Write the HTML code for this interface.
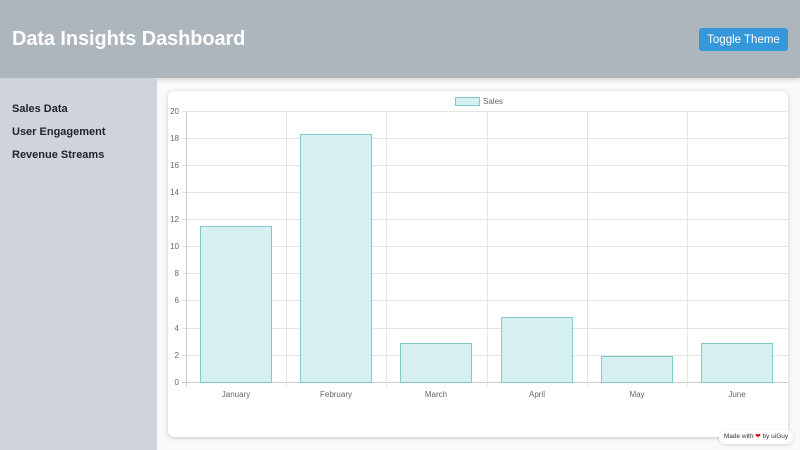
<!DOCTYPE html>
<html><head><meta charset="utf-8"><style>
*{margin:0;padding:0;box-sizing:border-box}
body{width:800px;height:450px;overflow:hidden;font-family:"Liberation Sans",sans-serif;background:#f8f9fa;position:relative}
.hdr{position:absolute;left:0;top:0;width:800px;height:78px;background:#adb5bd;box-shadow:0 2px 4px rgba(0,0,0,.15)}
.hdr h1{position:absolute;left:12px;top:28px;font-size:20px;color:#fff;font-weight:bold;letter-spacing:-0.1px}
.btn{position:absolute;left:699px;top:28px;width:89px;height:23px;background:#3498db;color:#fff;font-size:11.5px;border-radius:3px;text-align:center;line-height:24px}
.side{position:absolute;left:0;top:78px;width:157px;height:372px;background:#ced4da}
.side div{position:absolute;left:12px;font-size:11px;font-weight:bold;color:#212529}
.card{position:absolute;left:168px;top:91px;width:620px;height:346px;background:#fff;border-radius:6px;box-shadow:0 1px 4px rgba(0,0,0,.2)}
.badge{position:absolute;left:719px;top:430px;width:74px;height:14px;background:#fff;border-radius:7px;font-size:6.5px;color:#333;line-height:14px;text-align:center;box-shadow:0 1px 3px rgba(0,0,0,.15)}
</style></head><body>
<div class="hdr"><h1>Data Insights Dashboard</h1><div class="btn">Toggle Theme</div></div>
<div class="side"><div style="top:25px">Sales Data</div><div style="top:48px">User Engagement</div><div style="top:71px">Revenue Streams</div></div>
<div class="card"></div>
<svg style="position:absolute;left:0;top:0" width="800" height="450" font-family="Liberation Sans" font-size="8" fill="#666">
<g stroke="#e5e5e5" stroke-width="1">
<line x1="182" x2="788" y1="111.5" y2="111.5"/><line x1="182" x2="788" y1="138.5" y2="138.5"/><line x1="182" x2="788" y1="165.5" y2="165.5"/><line x1="182" x2="788" y1="192.5" y2="192.5"/><line x1="182" x2="788" y1="219.5" y2="219.5"/><line x1="182" x2="788" y1="246.5" y2="246.5"/><line x1="182" x2="788" y1="273.5" y2="273.5"/><line x1="182" x2="788" y1="300.5" y2="300.5"/><line x1="182" x2="788" y1="328.5" y2="328.5"/><line x1="182" x2="788" y1="355.5" y2="355.5"/><line x1="182" x2="788" y1="382.5" y2="382.5" stroke="#ccc"/>
<line x1="186.5" x2="186.5" y1="111" y2="387" stroke="#ccc"/><line x1="286.5" x2="286.5" y1="111" y2="387"/><line x1="386.5" x2="386.5" y1="111" y2="387"/><line x1="487.5" x2="487.5" y1="111" y2="387"/><line x1="587.5" x2="587.5" y1="111" y2="387"/><line x1="687.5" x2="687.5" y1="111" y2="387"/>
</g>
<g fill="#d6eff0" stroke="#7fcbc9" stroke-width="1">
<rect x="200.5" y="226.5" width="71" height="156"/><rect x="300.5" y="134.5" width="71" height="248"/><rect x="400.5" y="343.5" width="71" height="39"/><rect x="501.5" y="317.5" width="71" height="65"/><rect x="601.5" y="356.5" width="71" height="26"/><rect x="701.5" y="343.5" width="71" height="39"/>
<rect x="455.5" y="97.5" width="24" height="8"/>
</g>
<text x="483" y="104">Sales</text>
<g text-anchor="end"><text x="179" y="114">20</text><text x="179" y="141">18</text><text x="179" y="168">16</text><text x="179" y="195">14</text><text x="179" y="222">12</text><text x="179" y="249">10</text><text x="179" y="276">8</text><text x="179" y="303">6</text><text x="179" y="331">4</text><text x="179" y="358">2</text><text x="179" y="385">0</text></g>
<g text-anchor="middle"><text x="236" y="397">January</text><text x="336" y="397">February</text><text x="436" y="397">March</text><text x="537" y="397">April</text><text x="637" y="397">May</text><text x="737" y="397">June</text></g>
</svg>
<div class="badge">Made with <span style="color:#e00">❤</span> by uiGuy</div>
</body></html>
